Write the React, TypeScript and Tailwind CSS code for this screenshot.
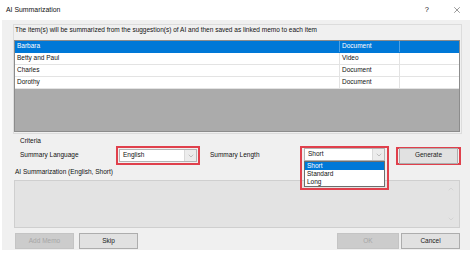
import React from 'react'
import { X, ChevronDown, ChevronUp } from 'lucide-react'

const rows = [
  { name: 'Barbara', type: 'Document', selected: true },
  { name: 'Betty and Paul', type: 'Video', selected: false },
  { name: 'Charles', type: 'Document', selected: false },
  { name: 'Dorothy', type: 'Document', selected: false },
]

const Combo: React.FC<{ value: string }> = ({ value }) => (
  <div className="flex h-[13px] w-full items-stretch border border-[#b4b4b4] bg-white">
    <span className="flex flex-1 items-center pl-[3px] leading-none">{value}</span>
    <span className="flex w-[12px] items-center justify-center border-l border-[#d9d9d9] bg-[#ececec]">
      <ChevronDown size={8} strokeWidth={1.2} className="text-[#7a7a7a]" />
    </span>
  </div>
)

const Btn: React.FC<{ label: string; disabled?: boolean; className?: string }> = ({ label, disabled, className }) => (
  <div
    className={`flex h-[16px] items-center justify-center border leading-none ${
      disabled ? 'border-[#c4c4c4] bg-[#cccccc] text-[#a6a6a6]' : 'border-[#adadad] bg-[#e1e1e1] text-[#1a1a1a]'
    } ${className ?? ''}`}
  >
    {label}
  </div>
)

export default function App() {
  return (
    <div className="flex h-[253px] w-[474px] flex-col overflow-hidden bg-white font-['Liberation_Sans',Arial,sans-serif] text-[6.5px] text-[#111]">
      {/* title bar */}
      <div className="flex h-[20px] shrink-0 items-center pl-[6px] pr-[12px]">
        <span className="text-[6.9px] leading-none">AI Summarization</span>
        <span className="ml-auto mr-[23px] text-[7.5px] leading-none text-[#222]">?</span>
        <X size={10} strokeWidth={1.1} className="text-[#222]" />
      </div>

      {/* body */}
      <div className="ml-[2px] mb-[3px] flex w-[468px] flex-1 flex-col bg-[#f0f0f0]">
        {/* items group */}
        <div className="ml-[11px] mt-[4px] flex w-[449px] flex-col border border-[#dcdcdc] pb-[1px]">
          <div className="flex h-[10px] items-center pl-[1px] leading-none">
            The item(s) will be summarized from the suggestion(s) of AI and then saved as linked memo to each item
          </div>
          <div className="mt-[5px] flex h-[92px] w-[446px] flex-col border border-[#8c8c8c] bg-[#ababab]">
            {rows.map((r) => (
              <div
                key={r.name}
                className={`flex h-[12px] border-b ${
                  r.selected ? 'border-[#0078d7] bg-[#0078d7] text-white' : 'border-[#e3e3e3] bg-white'
                }`}
              >
                <div className="flex w-[324px] items-center pl-[2px] leading-none">{r.name}</div>
                <div
                  className={`flex w-[60px] items-center border-l pl-[2px] leading-none ${
                    r.selected ? 'border-[#4aa0e6]' : 'border-[#e3e3e3]'
                  }`}
                >
                  {r.type}
                </div>
                <div className={`flex-1 border-l ${r.selected ? 'border-[#4aa0e6]' : 'border-[#e3e3e3]'}`} />
              </div>
            ))}
          </div>
        </div>

        {/* criteria */}
        <div className="mt-[2px] flex h-[10px] items-center pl-[18px] leading-none">Criteria</div>
        <div className="flex h-[19px] items-center pl-[18px]">
          <span className="w-[96px] leading-none">Summary Language</span>
          <div className="flex h-[19px] w-[84px] items-center border-2 border-[#e0404c] p-[1px]">
            <Combo value="English" />
          </div>
          <span className="ml-[10px] w-[90px] leading-none">Summary Length</span>
          <div className="relative h-[19px] w-[89px]">
            <div className="absolute left-0 top-0 z-10 flex h-[44px] w-[89px] flex-col border-2 border-[#e0404c] px-[2px]">
              <Combo value="Short" />
              <div className="flex w-full flex-col border border-[#6e6e6e] bg-white">
                <div className="flex h-[8px] items-center bg-[#0078d7] pl-[2px] leading-none text-white">Short</div>
                <div className="flex h-[8px] items-center pl-[2px] leading-none">Standard</div>
                <div className="flex h-[8px] items-center pl-[2px] leading-none">Long</div>
              </div>
            </div>
          </div>
          <div className="ml-[7px] flex h-[18px] w-[65px] items-center justify-center border-2 border-[#e0404c]">
            <Btn label="Generate" className="h-[13px] w-[59px]" />
          </div>
        </div>

        {/* result */}
        <div className="mt-[2px] flex h-[10px] items-center pl-[13px] leading-none">AI Summarization (English, Short)</div>
        <div className="ml-[12px] mt-[3px] flex h-[48px] w-[446px] border border-[#cfcfcf] bg-[#e3e3e3]">
          <div className="flex-1" />
          <div className="flex w-[17px] flex-col items-center justify-between py-[4px]">
            <ChevronUp size={8} strokeWidth={1.2} className="text-[#bdbdbd]" />
            <ChevronDown size={8} strokeWidth={1.2} className="text-[#bdbdbd]" />
          </div>
        </div>

        {/* buttons */}
        <div className="mt-[5px] flex h-[16px] items-center pl-[13px] pr-[10px]">
          <Btn label="Add Memo" disabled className="w-[59px]" />
          <Btn label="Skip" className="ml-[5px] w-[59px]" />
          <Btn label="OK" disabled className="ml-auto w-[62px]" />
          <Btn label="Cancel" className="ml-[2px] w-[59px]" />
        </div>
      </div>
    </div>
  )
}
